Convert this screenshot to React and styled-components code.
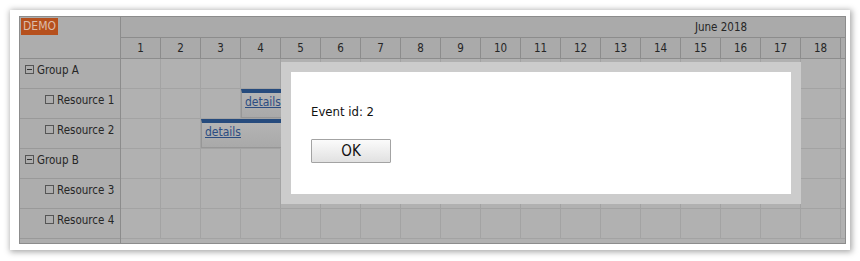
import React from 'react';
import styled, { createGlobalStyle } from 'styled-components';

const GlobalStyle = createGlobalStyle`
  html, body {
    margin: 0;
    padding: 0;
    background: #ffffff;
  }
  body {
    font-family: "DejaVu Sans Condensed", "DejaVu Sans", Tahoma, sans-serif;
    font-stretch: condensed;
  }
`;

// only the days that fit in the viewport (the month cell keeps its full width)
const days = Array.from({ length: 18 }, (_, i) => i + 1);

const resources = [
  { name: 'Group A', group: true },
  { name: 'Resource 1' },
  { name: 'Resource 2' },
  { name: 'Group B', group: true },
  { name: 'Resource 3' },
  { name: 'Resource 4' },
];

const events = [
  { id: 1, row: 1, start: 3, days: 3, text: 'details' },
  { id: 2, row: 2, start: 2, days: 4, text: 'details' },
];

const Page = styled.div`
  padding: 10px;
`;

const Card = styled.div`
  position: relative;
  width: 840px;
  height: 240px;
  box-sizing: border-box;
  padding: 6px 0 0 9px;
  background: #fff;
  box-shadow: 1px 1px 6px 1px rgba(0, 0, 0, 0.35);
`;

const Scheduler = styled.div`
  display: flex;
  width: 827px;
  height: 228px;
  box-sizing: border-box;
  border: 1px solid #8c8c8c;
  background: #b0b0b0;
  overflow: hidden;
  font-size: 11.5px;
  color: #262626;
`;

const RowHeaders = styled.div`
  flex: 0 0 101px;
  box-sizing: border-box;
  border-right: 1px solid #8c8c8c;
  background: #adadad;
`;

const Corner = styled.div`
  height: 42px;
  box-sizing: border-box;
  border-bottom: 1px solid #8c8c8c;
  padding: 1px;
`;

const Demo = styled.span`
  display: inline-block;
  height: 17px;
  line-height: 17px;
  padding: 0 2px;
  background: #b6501d;
  color: #dcbcab;
  font-size: 12px;
`;

const RowHeader = styled.div`
  height: 30px;
  box-sizing: border-box;
  border-bottom: 1px solid #999;
  display: flex;
  align-items: flex-start;
  gap: 3px;
  padding: 4px 0 0 ${(p) => (p.$group ? 5 : 25)}px;
  line-height: 14px;
`;

const Toggle = styled.span`
  position: relative;
  flex: 0 0 auto;
  width: 9px;
  height: 9px;
  margin-top: 2px;
  box-sizing: border-box;
  border: 1px solid #555;

  &::after {
    content: '';
    display: ${(p) => (p.$minus ? 'block' : 'none')};
    position: absolute;
    left: 1px;
    right: 1px;
    top: 3px;
    height: 1px;
    background: #333;
  }
`;

const Main = styled.div`
  flex: 1;
  overflow: hidden;
`;

const Timeline = styled.div`
  position: relative;
  width: 1200px;
`;

const MonthHeader = styled.div`
  height: 21px;
  box-sizing: border-box;
  border-bottom: 1px solid #8c8c8c;
  background: #aaaaaa;
  text-align: center;
  line-height: 20px;
`;

const DayRow = styled.div`
  display: flex;
  height: 21px;
  box-sizing: border-box;
  border-bottom: 1px solid #8c8c8c;
  background: #aaaaaa;
`;

const DayCell = styled.div`
  flex: 0 0 40px;
  box-sizing: border-box;
  border-right: 1px solid #8c8c8c;
  text-align: center;
  line-height: 20px;
`;

const GridRow = styled.div`
  display: flex;
  height: 30px;
  box-sizing: border-box;
  border-bottom: 1px solid #a3a3a3;
  background: #b1b1b1;
`;

const GridCell = styled.div`
  flex: 0 0 40px;
  box-sizing: border-box;
  border-right: 1px solid #a3a3a3;
`;

const Event = styled.div`
  position: absolute;
  top: ${(p) => 42 + p.$row * 30}px;
  left: ${(p) => p.$start * 40}px;
  width: ${(p) => p.$days * 40 - 1}px;
  height: 29px;
  box-sizing: border-box;
  border: 1px solid #979797;
  border-top: 4px solid #264b7d;
  background: linear-gradient(#b4b4b4, #a9a9a9);
  padding: 1px 3px;
  line-height: 16px;
`;

const EventLink = styled.a`
  color: #2b4c82;
  text-decoration: underline;
  font-size: 12px;
`;

const Modal = styled.div`
  position: absolute;
  left: 271px;
  top: 52px;
  width: 520px;
  height: 142px;
  box-sizing: border-box;
  border: 10px solid #cccccc;
  background: #ffffff;
  padding: 32px 20px 0;
  font-family: "DejaVu Sans Condensed", "DejaVu Sans", Tahoma, sans-serif;
`;

const Message = styled.div`
  font-size: 13px;
  line-height: 16px;
  color: #111;
`;

const Button = styled.button`
  display: block;
  margin-top: 19px;
  width: 80px;
  height: 24px;
  box-sizing: border-box;
  border: 1px solid #a3a3a3;
  border-radius: 1px;
  background: linear-gradient(#fbfbfb, #e1e1e1);
  font-family: inherit;
  font-stretch: condensed;
  font-size: 15px;
  color: #111;
  padding: 0;
`;

export default function App() {
  return (
    <>
      <GlobalStyle />
      <Page>
        <Card>
          <Scheduler>
            <RowHeaders>
              <Corner>
                <Demo>DEMO</Demo>
              </Corner>
              {resources.map((r) => (
                <RowHeader key={r.name} $group={r.group}>
                  <Toggle $minus={r.group} />
                  <span>{r.name}</span>
                </RowHeader>
              ))}
            </RowHeaders>
            <Main>
              <Timeline>
                <MonthHeader>June 2018</MonthHeader>
                <DayRow>
                  {days.map((d) => (
                    <DayCell key={d}>{d}</DayCell>
                  ))}
                </DayRow>
                {resources.map((r) => (
                  <GridRow key={r.name}>
                    {days.map((d) => (
                      <GridCell key={d} />
                    ))}
                  </GridRow>
                ))}
                {events.map((e) => (
                  <Event key={e.id} $row={e.row} $start={e.start} $days={e.days}>
                    <EventLink href="#">{e.text}</EventLink>
                  </Event>
                ))}
              </Timeline>
            </Main>
          </Scheduler>
          <Modal>
            <Message>Event id: 2</Message>
            <Button>OK</Button>
          </Modal>
        </Card>
      </Page>
    </>
  );
}
